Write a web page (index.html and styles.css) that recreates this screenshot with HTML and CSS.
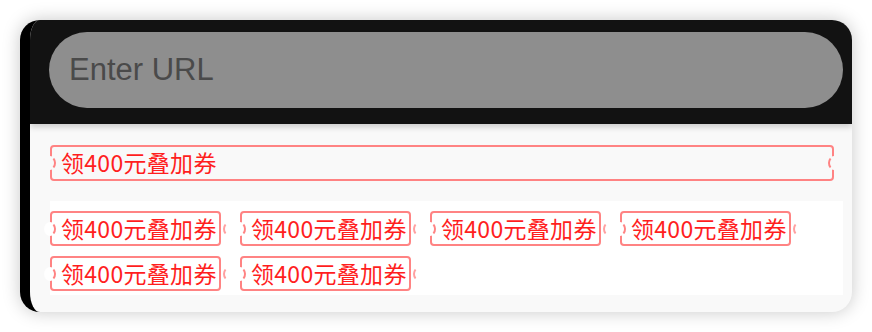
FILE: index.html
```html
<!DOCTYPE html>
<html lang="zh">
<head>
<meta charset="utf-8">
<link rel="stylesheet" href="styles.css">
</head>
<body>
<div class="frame">
  <div class="toolbar">
    <div class="url">Enter URL</div>
  </div>
  <div class="content">
    <div class="coupon wide">领400元叠加券</div>
    <div class="list">
      <div class="coupon small">领400元叠加券</div>
      <div class="coupon small">领400元叠加券</div>
      <div class="coupon small">领400元叠加券</div>
      <div class="coupon small">领400元叠加券</div>
      <div class="coupon small">领400元叠加券</div>
      <div class="coupon small">领400元叠加券</div>
    </div>
  </div>
</div>
</body>
</html>
```

FILE: styles.css
```css
html, body {
  margin: 0;
  padding: 0;
  background: #ffffff;
}
body {
  padding: 20px;
  width: 832px;
}
.frame {
  width: 822px;
  height: 292px;
  border-left: 10px solid #000;
  border-radius: 20px;
  overflow: hidden;
  background: #f9f9f9;
  box-shadow: 0 0 18px rgba(0, 0, 0, 0.22);
  display: flex;
  flex-direction: column;
}
.toolbar {
  height: 104px;
  box-sizing: border-box;
  background: #121212;
  padding: 12px 9px 16px 19px;
  position: relative;
  z-index: 1;
  box-shadow: 0 3px 6px rgba(0, 0, 0, 0.18);
}
.url {
  height: 76px;
  border-radius: 38px;
  background: #8e8e8e;
  padding-left: 20px;
  display: flex;
  align-items: center;
  font-family: "Liberation Sans", Arial, sans-serif;
  font-size: 31px;
  color: #4a4a4a;
}
.content {
  padding: 21px 9px 0 20px;
  flex: 1;
}
.coupon {
  position: relative;
  box-sizing: border-box;
  border: 2px solid #ff8383;
  border-radius: 4px;
  padding: 0 0 2px 9px;
  display: flex;
  align-items: center;
  font-family: "Noto Sans CJK SC", "Noto Sans", sans-serif;
  font-size: 23px;
  letter-spacing: 0.3px;
  color: #ff1e1e;
  white-space: nowrap;
}
.coupon::before,
.coupon::after {
  content: "";
  position: absolute;
  top: 50%;
  width: 8px;
  height: 10px;
  margin-top: -7px;
  border: 2px solid transparent;
  border-radius: 50%;
}
.coupon::before {
  left: -8px;
  border-right-color: #ff8383;
}
.wide {
  height: 36px;
  margin-right: 9px;
  background: #f9f9f9;
}
.wide::before {
  background: #f9f9f9;
}
.wide::after {
  right: -8px;
  border-left-color: #ff8383;
  background: #f9f9f9;
}
.list {
  margin-top: 20px;
  background: #ffffff;
  padding: 10px 0 4px 0;
  display: flex;
  flex-wrap: wrap;
  row-gap: 10px;
}
.small {
  width: 171px;
  height: 35px;
  margin-right: 19px;
  background: #ffffff;
}
.small::before {
  background: #ffffff;
}
.small::after {
  left: 100%;
  margin-left: 4px;
  border-left-color: #ffa0a0;
}
```
